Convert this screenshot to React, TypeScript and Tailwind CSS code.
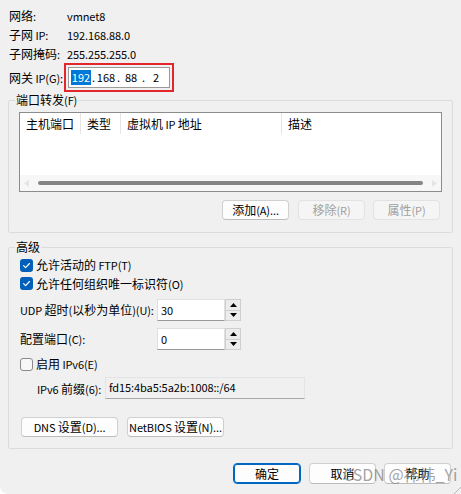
import React from "react";

const font = "font-['Noto_Sans_CJK_SC','Noto_Sans',sans-serif]";

function T({ s }: { s: string }) {
  const parts = s.split(/([\u3000-\u9fff\uff00-\uffef]+)/).filter((p) => p.length > 0);
  return (
    <span className="whitespace-pre">
      {parts.map((p, i) =>
        /[\u3000-\u9fff\uff00-\uffef]/.test(p) ? (
          <span key={i}>{p}</span>
        ) : (
          <span key={i} className="text-[11px] tracking-[-0.1px]">
            {p}
          </span>
        )
      )}
    </span>
  );
}

function Check({ checked }: { checked: boolean }) {
  if (checked) {
    return (
      <span className="flex h-[13px] w-[13px] shrink-0 items-center justify-center rounded-[3px] bg-[#005fb8]">
        <svg width="9" height="9" viewBox="0 0 10 10">
          <path d="M1.8 5.2 L4 7.3 L8.3 2.8" fill="none" stroke="#fff" strokeWidth="1.3" strokeLinecap="round" strokeLinejoin="round" />
        </svg>
      </span>
    );
  }
  return <span className="h-[13px] w-[13px] shrink-0 rounded-[3px] border border-[#8a8a8a] bg-[#f7f7f7]" />;
}

function Btn({ s, w, disabled, primary }: { s: string; w: string; disabled?: boolean; primary?: boolean }) {
  const base = "flex shrink-0 items-center justify-center rounded-[4px] text-[12px] leading-none whitespace-nowrap";
  let cls = "border border-[#d0d0d0] border-b-[#bcbcbc] bg-[#fdfdfd] text-black";
  if (disabled) cls = "border border-[#e2e2e2] bg-[#f5f5f5] text-[#a0a0a0]";
  if (primary) cls = "border border-[#0067c0] bg-[#fdfdfd] text-black shadow-[inset_0_0_0_1px_#0067c0]";
  return (
    <div className={`${base} ${cls} ${w} h-full`}>
      <T s={s} />
    </div>
  );
}

function Spin({ value }: { value: string }) {
  return (
    <div className="flex h-[22px] shrink-0">
      <div className="flex h-full w-[68px] items-center border border-[#e0e0e0] border-b-[#9a9a9a] bg-white pl-[3px] leading-none">
        <T s={value} />
      </div>
      <div className="flex h-full w-[16px] flex-col border border-[#cfcfcf] bg-[#ececec]">
        <div className="flex flex-1 items-center justify-center border-b border-[#cfcfcf]">
          <svg width="7" height="4" viewBox="0 0 7 4"><path d="M3.5 0 L7 4 L0 4 Z" fill="#000" /></svg>
        </div>
        <div className="flex flex-1 items-center justify-center">
          <svg width="7" height="4" viewBox="0 0 7 4"><path d="M0 0 L7 0 L3.5 4 Z" fill="#000" /></svg>
        </div>
      </div>
    </div>
  );
}

export default function App() {
  return (
    <div className="min-h-[494px] w-[461px] bg-white">
      <div className={`relative h-[494px] w-[461px] whitespace-nowrap rounded-bl-[8px] bg-[#f0f0f0] pl-[8px] pt-[6px] text-[12px] text-black ${font}`}>
        {/* info rows */}
        <div className="flex h-[19px] items-center pl-[1px]">
          <span className="w-[58px] shrink-0"><T s="网络:" /></span>
          <T s="vmnet8" />
        </div>
        <div className="flex h-[19px] items-center pl-[1px]">
          <span className="w-[58px] shrink-0"><T s="子网 IP:" /></span>
          <T s="192.168.88.0" />
        </div>
        <div className="flex h-[19px] items-center pl-[1px]">
          <span className="w-[58px] shrink-0"><T s="子网掩码:" /></span>
          <T s="255.255.255.0" />
        </div>
        <div className="flex h-[29px] items-center pl-[1px]">
          <span className="w-[55px] shrink-0"><T s="网关 IP(G):" /></span>
          <div className="h-[29px] w-[110px] shrink-0 border-2 border-[#e3262b] p-[2px]">
            <div className="flex h-full items-center border border-[#9a9a9a] bg-white pl-[2px] text-[11px] leading-none">
              <span className="flex w-[20px] justify-center">
                <span className="bg-[#0078d7] px-[1px] py-[2px] text-white">192</span>
              </span>
              <span className="flex w-[5px] justify-center">.</span>
              <span className="flex w-[20px] justify-center">168</span>
              <span className="flex w-[5px] justify-center">.</span>
              <span className="flex w-[20px] justify-center">88</span>
              <span className="flex w-[5px] justify-center">.</span>
              <span className="flex w-[20px] justify-center">2</span>
            </div>
          </div>
        </div>

        {/* port forwarding group */}
        <div className="relative mt-[8px] h-[133px] w-[445px] rounded-[2px] border border-[#dcdcdc] px-[10px] pt-[11px]">
          <span className="absolute -top-[9px] left-[6px] bg-[#f0f0f0] px-[1px] leading-[16px]"><T s="端口转发(F)" /></span>
          <div className="flex h-[80px] flex-col border border-[#8c8c8c] bg-white">
            <div className="flex h-[21px] items-stretch">
              <div className="flex w-[61px] items-center border-r border-[#e5e5e5] pl-[6px]">主机端口</div>
              <div className="flex w-[40px] items-center border-r border-[#e5e5e5] pl-[6px]">类型</div>
              <div className="flex w-[161px] items-center border-r border-[#e5e5e5] pl-[6px]"><T s="虚拟机 IP 地址" /></div>
              <div className="flex flex-1 items-center pl-[6px]">描述</div>
            </div>
            <div className="flex-1" />
            <div className="flex h-[16px] items-center bg-[#f7f7f7] px-[4px]">
              <svg width="6" height="7" viewBox="0 0 6 7"><path d="M5 0 L0 3.5 L5 7 Z" fill="#e4e4e4" /></svg>
              <div className="mx-[8px] h-[4px] flex-1 rounded-[2px] bg-[#858585]" />
              <svg width="6" height="7" viewBox="0 0 6 7"><path d="M1 0 L6 3.5 L1 7 Z" fill="#e4e4e4" /></svg>
            </div>
          </div>
          <div className="mt-[8px] flex h-[20px] justify-end pr-[2px]">
            <Btn w="w-[67px]" s="添加(A)..." />
            <div className="w-[9px]" />
            <Btn w="w-[67px]" disabled s="移除(R)" />
            <div className="w-[8px]" />
            <Btn w="w-[67px]" disabled s="属性(P)" />
          </div>
        </div>

        {/* advanced group */}
        <div className="relative mt-[14px] h-[202px] w-[445px] rounded-[2px] border border-[#dcdcdc] pl-[11px] pt-[8px]">
          <span className="absolute -top-[9px] left-[6px] bg-[#f0f0f0] px-[1px] leading-[16px]">高级</span>
          <div className="flex h-[18px] items-center gap-[3px]">
            <Check checked />
            <T s="允许活动的 FTP(T)" />
          </div>
          <div className="flex h-[19px] items-center gap-[3px]">
            <Check checked />
            <T s="允许任何组织唯一标识符(O)" />
          </div>
          <div className="mt-[6px] flex h-[22px] items-center">
            <span className="w-[137px] shrink-0"><T s="UDP 超时(以秒为单位)(U):" /></span>
            <Spin value="30" />
          </div>
          <div className="mt-[7px] flex h-[22px] items-center">
            <span className="w-[137px] shrink-0"><T s="配置端口(C):" /></span>
            <Spin value="0" />
          </div>
          <div className="mt-[5px] flex h-[18px] items-center gap-[3px]">
            <Check checked={false} />
            <T s="启用 IPv6(E)" />
          </div>
          <div className="mt-[4px] flex h-[22px] items-start pl-[17px]">
            <span className="mt-[3px] w-[68px] shrink-0"><T s="IPv6 前缀(6):" /></span>
            <div className="flex h-[22px] w-[200px] shrink-0 items-start border border-[#e4e4e4] border-b-[#a8a8a8] bg-[#f0f0f0] pl-[3px] pt-[1px] leading-[16px]">
              <T s="fd15:4ba5:5a2b:1008::/64" />
            </div>
          </div>
          <div className="mt-[18px] flex h-[20px] pl-[1px]">
            <Btn w="w-[97px]" s="DNS 设置(D)..." />
            <div className="w-[9px]" />
            <Btn w="w-[97px]" s="NetBIOS 设置(N)..." />
          </div>
        </div>

        {/* dialog buttons */}
        <div className="mt-[14px] flex h-[21px] justify-end pr-[10px]">
          <Btn w="w-[68px]" primary s="确定" />
          <div className="w-[8px]" />
          <Btn w="w-[67px]" s="取消" />
          <div className="w-[8px]" />
          <Btn w="w-[67px]" s="帮助" />
        </div>

        {/* resize grip */}
        <svg className="absolute bottom-0 right-0" width="8" height="8" viewBox="0 0 8 8">
          <path d="M8 1 L1 8" stroke="#b8b8b8" strokeWidth="1" />
        </svg>

        {/* watermark */}
        <span className="pointer-events-none absolute left-[343px] top-[464px] whitespace-nowrap text-[16px] leading-[20px] text-[#8a8a8a]/80">
          CSDN @祎祎_Yi
        </span>
      </div>
    </div>
  );
}
